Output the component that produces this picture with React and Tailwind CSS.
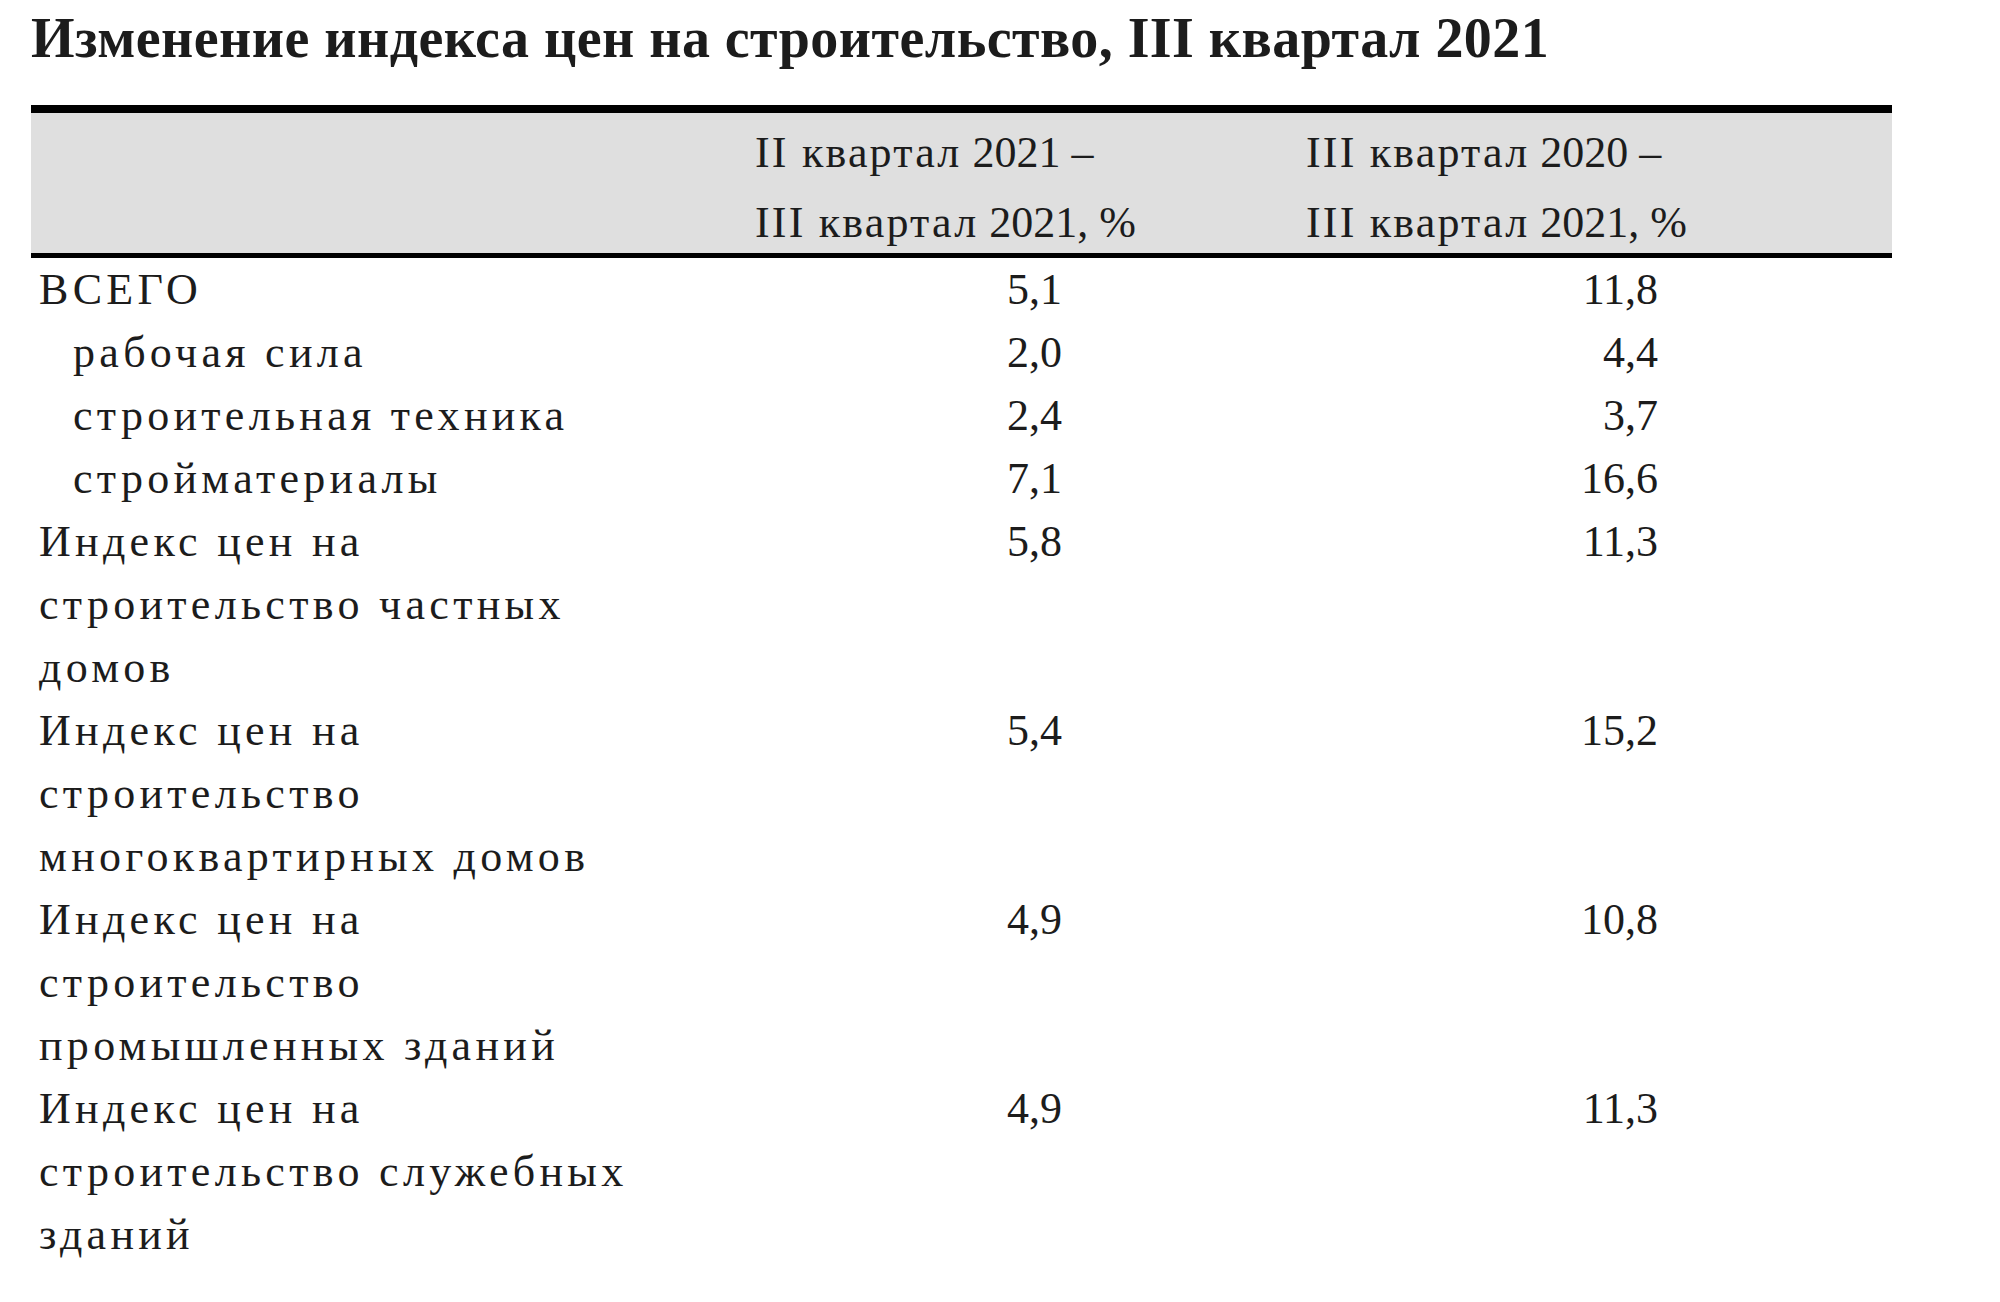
const rows = [
  { label: ["ВСЕГО"], a: "5,1", b: "11,8" },
  { label: ["рабочая сила"], a: "2,0", b: "4,4", sub: true },
  { label: ["строительная техника"], a: "2,4", b: "3,7", sub: true },
  { label: ["стройматериалы"], a: "7,1", b: "16,6", sub: true },
  { label: ["Индекс цен на", "строительство частных", "домов"], a: "5,8", b: "11,3" },
  { label: ["Индекс цен на", "строительство", "многоквартирных домов"], a: "5,4", b: "15,2" },
  { label: ["Индекс цен на", "строительство", "промышленных зданий"], a: "4,9", b: "10,8" },
  { label: ["Индекс цен на", "строительство служебных", "зданий"], a: "4,9", b: "11,3" },
];

const HeadLine = ({ word, rest }) => (
  <div>
    <span className="tracking-[2.2px]">{word}</span> {rest}
  </div>
);

const App = () => {
  return (
    <div className="min-h-screen bg-white text-[#1c1c1c] font-['Liberation_Serif','Times_New_Roman',serif]">
      <div className="pl-[31px] pt-[10px] w-[1892px]">
        <h1 className="text-[56px] leading-[56px] font-bold tracking-[0.45px]">
          Изменение индекса цен на строительство, III квартал 2021
        </h1>

        <div className="mt-[39px] border-t-[8px] border-black">
          {/* header */}
          <div className="grid grid-cols-[714px_551px_596px] h-[140px] bg-[#dfdfdf] text-[44px] leading-[70px] pt-[5px]">
            <div></div>
            <div className="pl-[10px]">
              <HeadLine word="II квартал" rest="2021 –" />
              <HeadLine word="III квартал" rest="2021, %" />
            </div>
            <div className="pl-[10px]">
              <HeadLine word="III квартал" rest="2020 –" />
              <HeadLine word="III квартал" rest="2021, %" />
            </div>
          </div>
          <div className="h-[5px] bg-black"></div>

          {/* body */}
          <div className="text-[44px] leading-[63px]">
            {rows.map((row, i) => (
              <div key={i} className="grid grid-cols-[714px_551px_596px]">
                <div className={(row.sub ? "pl-[42px]" : "pl-[8px]") + " tracking-[4.3px]"}>
                  {row.label.map((line, j) => (
                    <div key={j}>{line}</div>
                  ))}
                </div>
                <div className="text-right pr-[234px]">{row.a}</div>
                <div className="text-right pr-[234px]">{row.b}</div>
              </div>
            ))}
          </div>
        </div>
      </div>
    </div>
  );
};

export default App;
